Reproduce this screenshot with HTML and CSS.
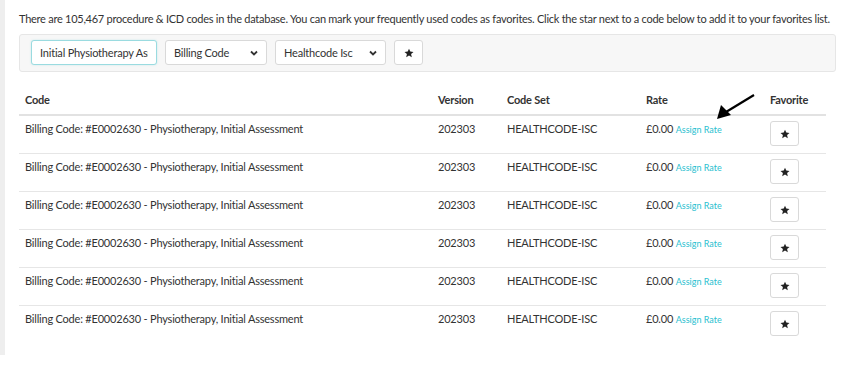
FILE: index.html
```html
<!DOCTYPE html>
<html>
<head>
    <title>Procedure Codes</title>
    <link rel="stylesheet" href="styles.css">
</head>
<body>
    <div class="sidebar"></div>
    <div class="main">
        <p class="intro">There are 105,467 procedure &amp; ICD codes in the database. You can mark your frequently used codes as favorites. Click the star next to a code below to add it to your favorites list.</p>

        <div class="filters">
            <input class="search" type="text" value="Initial Physiotherapy Assessment">
            <div class="select sel-type">Billing Code
                <svg class="chev" width="8" height="6" viewBox="0 0 8 6"><path d="M1 1.5 L4 4.5 L7 1.5" fill="none" stroke="#333" stroke-width="1.8"/></svg>
            </div>
            <div class="select sel-set">Healthcode Isc
                <svg class="chev" width="8" height="6" viewBox="0 0 8 6"><path d="M1 1.5 L4 4.5 L7 1.5" fill="none" stroke="#333" stroke-width="1.8"/></svg>
            </div>
            <button class="star-btn"><svg width="10" height="10" viewBox="0 0 24 24"><path d="M12 1.5l3.1 7.1 7.7.7-5.8 5.1 1.7 7.6L12 18l-6.7 4 1.7-7.6L1.2 9.3l7.7-.7z" fill="#222"/></svg></button>
        </div>

        <div class="table-wrap">
            <table class="codes">
                <thead>
                    <tr>
                        <th class="c-code">Code</th>
                        <th class="c-ver">Version</th>
                        <th class="c-set">Code Set</th>
                        <th class="c-rate">Rate</th>
                        <th class="c-fav">Favorite</th>
                    </tr>
                </thead>
                <tbody>
                    <tr>
                        <td>Billing Code: #E0002630 - Physiotherapy, Initial Assessment</td>
                        <td>202303</td>
                        <td>HEALTHCODE-ISC</td>
                        <td>£0.00 <a class="assign" href="#">Assign Rate</a></td>
                        <td><button class="star-btn"><svg width="10" height="10" viewBox="0 0 24 24"><path d="M12 1.5l3.1 7.1 7.7.7-5.8 5.1 1.7 7.6L12 18l-6.7 4 1.7-7.6L1.2 9.3l7.7-.7z" fill="#222"/></svg></button></td>
                    </tr>
                    <tr>
                        <td>Billing Code: #E0002630 - Physiotherapy, Initial Assessment</td>
                        <td>202303</td>
                        <td>HEALTHCODE-ISC</td>
                        <td>£0.00 <a class="assign" href="#">Assign Rate</a></td>
                        <td><button class="star-btn"><svg width="10" height="10" viewBox="0 0 24 24"><path d="M12 1.5l3.1 7.1 7.7.7-5.8 5.1 1.7 7.6L12 18l-6.7 4 1.7-7.6L1.2 9.3l7.7-.7z" fill="#222"/></svg></button></td>
                    </tr>
                    <tr>
                        <td>Billing Code: #E0002630 - Physiotherapy, Initial Assessment</td>
                        <td>202303</td>
                        <td>HEALTHCODE-ISC</td>
                        <td>£0.00 <a class="assign" href="#">Assign Rate</a></td>
                        <td><button class="star-btn"><svg width="10" height="10" viewBox="0 0 24 24"><path d="M12 1.5l3.1 7.1 7.7.7-5.8 5.1 1.7 7.6L12 18l-6.7 4 1.7-7.6L1.2 9.3l7.7-.7z" fill="#222"/></svg></button></td>
                    </tr>
                    <tr>
                        <td>Billing Code: #E0002630 - Physiotherapy, Initial Assessment</td>
                        <td>202303</td>
                        <td>HEALTHCODE-ISC</td>
                        <td>£0.00 <a class="assign" href="#">Assign Rate</a></td>
                        <td><button class="star-btn"><svg width="10" height="10" viewBox="0 0 24 24"><path d="M12 1.5l3.1 7.1 7.7.7-5.8 5.1 1.7 7.6L12 18l-6.7 4 1.7-7.6L1.2 9.3l7.7-.7z" fill="#222"/></svg></button></td>
                    </tr>
                    <tr>
                        <td>Billing Code: #E0002630 - Physiotherapy, Initial Assessment</td>
                        <td>202303</td>
                        <td>HEALTHCODE-ISC</td>
                        <td>£0.00 <a class="assign" href="#">Assign Rate</a></td>
                        <td><button class="star-btn"><svg width="10" height="10" viewBox="0 0 24 24"><path d="M12 1.5l3.1 7.1 7.7.7-5.8 5.1 1.7 7.6L12 18l-6.7 4 1.7-7.6L1.2 9.3l7.7-.7z" fill="#222"/></svg></button></td>
                    </tr>
                    <tr>
                        <td>Billing Code: #E0002630 - Physiotherapy, Initial Assessment</td>
                        <td>202303</td>
                        <td>HEALTHCODE-ISC</td>
                        <td>£0.00 <a class="assign" href="#">Assign Rate</a></td>
                        <td><button class="star-btn"><svg width="10" height="10" viewBox="0 0 24 24"><path d="M12 1.5l3.1 7.1 7.7.7-5.8 5.1 1.7 7.6L12 18l-6.7 4 1.7-7.6L1.2 9.3l7.7-.7z" fill="#222"/></svg></button></td>
                    </tr>
                </tbody>
            </table>
            <!-- annotation arrow pointing at the first "Assign Rate" link -->
            <svg class="arrow" width="45" height="32" viewBox="0 0 45 32">
                <line x1="40" y1="4" x2="12" y2="21" stroke="#000" stroke-width="2.2"/>
                <polygon points="3,28 7,14 17,24" fill="#000"/>
            </svg>
        </div>
    </div>
</body>
</html>
```

FILE: styles.css
```css
body { margin: 0; display: flex; align-items: flex-start; font-family: Lato, Arial, sans-serif; font-size: 11px; letter-spacing: -0.2px; color: #333; background: #fff; }
.sidebar { width: 5px; height: 355px; background: #eeeeee; flex-shrink: 0; }
.main { flex: 1; min-width: 0; padding: 11px 14px 0 14px; }

.intro { margin: 0; line-height: 16px; white-space: nowrap; letter-spacing: -0.26px; }

.filters { margin-top: 7px; display: flex; gap: 8px; padding: 5px 11px 6px; background: #f7f7f7; border: 1px solid #e6e6e6; border-radius: 3px; }
.search { width: 126px; height: 25px; box-sizing: border-box; padding: 0 8px; border: 1px solid #9adbe0; border-radius: 3px; font: inherit; letter-spacing: inherit; color: #333; background: #fff; outline: none; box-shadow: 0 0 2px rgba(80, 200, 210, 0.3); }
.select { height: 25px; box-sizing: border-box; padding: 0 8px; display: flex; align-items: center; justify-content: space-between; background: #fff; border: 1px solid #d9d9d9; border-radius: 3px; }
.sel-type { width: 102px; }
.sel-set { width: 111px; }
.chev { margin-left: 6px; }

.star-btn { width: 29px; height: 25px; padding: 0; display: flex; align-items: center; justify-content: center; background: #fff; border: 1px solid #d9d9d9; border-radius: 3px; cursor: pointer; }

.table-wrap { position: relative; margin-top: 14px; width: 807px; }
.codes { width: 807px; border-collapse: collapse; table-layout: fixed; }
.codes th { text-align: left; font-weight: 700; height: 28px; padding: 0 6px; line-height: 16px; border-bottom: 2px solid #e2e2e2; }
.codes td { vertical-align: top; padding: 5px 6px 7px; line-height: 16px; border-top: 1px solid #e6e6e6; }
.codes tbody tr:first-child td { border-top: none; }
.c-code { width: 401px; }
.c-ver { width: 57px; }
.c-set { width: 127px; }
.c-rate { width: 112px; }
.c-fav { width: 50px; }
.assign { color: #2bbfd0; font-size: 9px; letter-spacing: 0; text-decoration: none; }

.arrow { position: absolute; left: 695px; top: 5px; }
```
